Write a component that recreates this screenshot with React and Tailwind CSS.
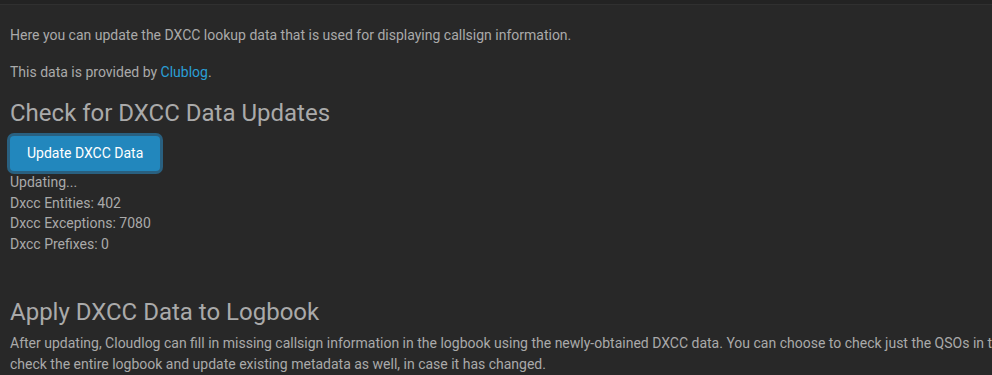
import React from 'react';

const App = () => {
  return (
    <div className="min-h-screen bg-[#282828] text-[#aaaaaa] overflow-hidden" style={{ fontFamily: 'Roboto, "Liberation Sans", sans-serif' }}>
      {/* top bar edge */}
      <div className="h-[5px] bg-[#232323] border-b border-[#303030]"></div>

      <div className="px-[10px] pt-[20px] text-[14px] leading-[21px] whitespace-nowrap">
        <p className="mb-4">Here you can update the DXCC lookup data that is used for displaying callsign information.</p>
        <p className="mb-4">
          This data is provided by <a href="#" className="text-[#2a9fd6]">Clublog</a>.
        </p>

        <h2 className="text-[24px] leading-[29px] mb-2 font-normal">Check for DXCC Data Updates</h2>
        <button className="px-[17px] h-[35px] rounded-[4px] bg-[#2287bd] text-white text-[14px] shadow-[0_0_0_3px_rgba(42,115,158,0.75)]">
          Update DXCC Data
        </button>
        <div className="leading-[20.5px] mt-[1px]">
          <div>Updating...</div>
          <div>Dxcc Entities: 402</div>
          <div>Dxcc Exceptions: 7080</div>
          <div>Dxcc Prefixes: 0</div>
        </div>

        <h2 className="text-[24px] leading-[29px] mt-[44px] mb-[6px] font-normal">Apply DXCC Data to Logbook</h2>
        <p>
          After updating, Cloudlog can fill in missing callsign information in the logbook using the newly-obtained DXCC data. You can choose to check just the QSOs in the logbook that are missing DXCC metadata or to re-
          <br />
          check the entire logbook and update existing metadata as well, in case it has changed.
        </p>
      </div>
    </div>
  );
};

export default App;
